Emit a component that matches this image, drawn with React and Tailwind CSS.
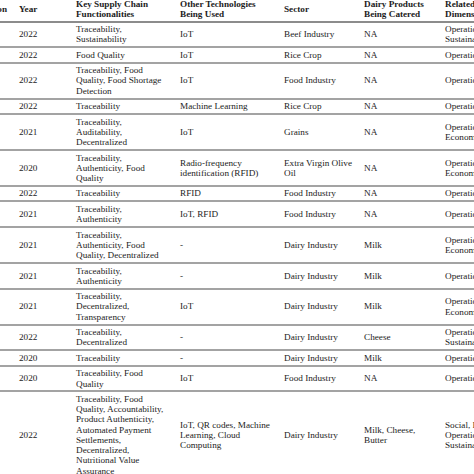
import React from "react";

const rows = [
  ["2022", ["Traceability,", "Sustainability"], ["IoT"], ["Beef Industry"], ["NA"], ["Operational,", "Sustainability"]],
  ["2022", ["Food Quality"], ["IoT"], ["Rice Crop"], ["NA"], ["Operational"]],
  ["2022", ["Traceability, Food", "Quality, Food Shortage", "Detection"], ["IoT"], ["Food Industry"], ["NA"], ["Operational"]],
  ["2022", ["Traceability"], ["Machine Learning"], ["Rice Crop"], ["NA"], ["Operational"]],
  ["2021", ["Traceability,", "Auditability,", "Decentralized"], ["IoT"], ["Grains"], ["NA"], ["Operational,", "Economic"]],
  ["2020", ["Traceability,", "Authenticity, Food", "Quality"], ["Radio-frequency", "identification (RFID)"], ["Extra Virgin Olive", "Oil"], ["NA"], ["Operational,", "Economic"]],
  ["2022", ["Traceability"], ["RFID"], ["Food Industry"], ["NA"], ["Operational"]],
  ["2021", ["Traceability,", "Authenticity"], ["IoT, RFID"], ["Food Industry"], ["NA"], ["Operational"]],
  ["2021", ["Traceability,", "Authenticity, Food", "Quality, Decentralized"], ["-"], ["Dairy Industry"], ["Milk"], ["Operational,", "Economic"]],
  ["2021", ["Traceability,", "Authenticity"], ["-"], ["Dairy Industry"], ["Milk"], ["Operational"]],
  ["2021", ["Traceability,", "Decentralized,", "Transparency"], ["IoT"], ["Dairy Industry"], ["Milk"], ["Operational,", "Economic"]],
  ["2022", ["Traceability,", "Decentralized"], ["-"], ["Dairy Industry"], ["Cheese"], ["Operational,", "Sustainability"]],
  ["2020", ["Traceability"], ["-"], ["Dairy Industry"], ["Milk"], ["Operational"]],
  ["2020", ["Traceability, Food", "Quality"], ["IoT"], ["Food Industry"], ["NA"], ["Operational"]],
  [
    "2022",
    [
      "Traceability, Food",
      "Quality, Accountability,",
      "Product Authenticity,",
      "Automated Payment",
      "Settlements,",
      "Decentralized,",
      "Nutritional Value",
      "Assurance",
    ],
    ["IoT, QR codes, Machine", "Learning, Cloud", "Computing"],
    ["Dairy Industry"],
    ["Milk, Cheese,", "Butter"],
    ["Social, Economic,", "Operational,", "Sustainability"],
  ],
];

const Lines = ({ lines }) => (
  <>
    {lines.map((l, i) => (
      <div key={i}>{l}</div>
    ))}
  </>
);

export default function App() {
  return (
    <div
      className="w-[474px] h-[474px] overflow-hidden bg-white text-[#1c1c1c]"
      style={{ fontFamily: '"Liberation Serif", "Times New Roman", serif' }}
    >
      <table className="table-fixed w-[565px] min-w-[565px] border-collapse ml-[-40px] mt-[-1px] text-[9.2px] leading-[10.25px] whitespace-nowrap">
        <colgroup>
          <col className="w-[59px]" />
          <col className="w-[57px]" />
          <col className="w-[104px]" />
          <col className="w-[104px]" />
          <col className="w-[80px]" />
          <col className="w-[81px]" />
          <col className="w-[80px]" />
        </colgroup>
        <thead>
          <tr className="border-b-2 border-[#8c8c8c] font-bold text-left">
            <th className="pr-[12px] pb-[1px] text-right align-middle">Citation</th>
            <th className="pb-[1px] text-left align-middle">Year</th>
            <th className="pb-[1px] text-left align-middle">
              <Lines lines={["Key Supply Chain", "Functionalities"]} />
            </th>
            <th className="pb-[1px] text-left align-middle">
              <Lines lines={["Other Technologies", "Being Used"]} />
            </th>
            <th className="pb-[1px] text-left align-middle">Sector</th>
            <th className="pb-[1px] text-left align-middle">
              <Lines lines={["Dairy Products", "Being Catered"]} />
            </th>
            <th className="pb-[1px] text-left align-middle">
              <Lines lines={["Related", "Dimensions"]} />
            </th>
          </tr>
        </thead>
        <tbody>
          {rows.map((r, i) => (
            <tr key={i} className="border-b-2 border-[#a3a3a3]">
              <td className="py-[1.6px]"></td>
              <td className="py-[1.6px] align-middle">{r[0]}</td>
              <td className="py-[1.6px] align-middle">
                <Lines lines={r[1]} />
              </td>
              <td className="py-[1.6px] align-middle">
                <Lines lines={r[2]} />
              </td>
              <td className="py-[1.6px] align-middle">
                <Lines lines={r[3]} />
              </td>
              <td className="py-[1.6px] align-middle">
                <Lines lines={r[4]} />
              </td>
              <td className="py-[1.6px] align-middle">
                <Lines lines={r[5]} />
              </td>
            </tr>
          ))}
        </tbody>
      </table>
    </div>
  );
}
